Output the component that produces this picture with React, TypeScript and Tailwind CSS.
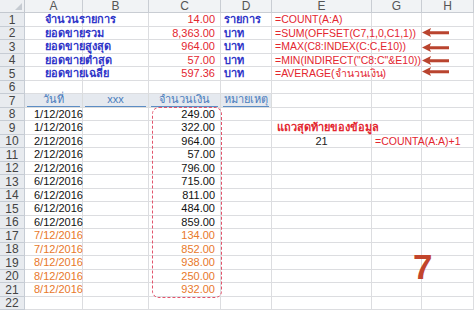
import React from "react";

type Cell = { t: string; c?: string };

const cols = ["A", "B", "C", "D", "E", "G", "H"];

const blue = "text-[#2f35c8] font-bold";
const red = "text-[#e3262f]";
const formula = "text-[#e3262f] text-[10.5px] pl-[3px]";
const head = "text-[#4a7dbd] justify-center";
const orange = "text-[#e8782a]";

const data: Record<number, Partial<Record<string, Cell>>> = {
  1: {
    A: { t: "จำนวนรายการ", c: `${blue} pl-[20px]` },
    C: { t: "14.00", c: `${red} justify-end pr-[5px]` },
    D: { t: "รายการ", c: `${blue} pl-[3px]` },
    E: { t: "=COUNT(A:A)", c: formula },
  },
  2: {
    A: { t: "ยอดขายรวม", c: `${blue} pl-[20px]` },
    C: { t: "8,363.00", c: `${red} justify-end pr-[5px]` },
    D: { t: "บาท", c: `${blue} pl-[3px]` },
    E: { t: "=SUM(OFFSET(C7,1,0,C1,1))", c: formula },
  },
  3: {
    A: { t: "ยอดขายสูงสุด", c: `${blue} pl-[20px]` },
    C: { t: "964.00", c: `${red} justify-end pr-[5px]` },
    D: { t: "บาท", c: `${blue} pl-[3px]` },
    E: { t: "=MAX(C8:INDEX(C:C,E10))", c: formula },
  },
  4: {
    A: { t: "ยอดขายต่ำสุด", c: `${blue} pl-[20px]` },
    C: { t: "57.00", c: `${red} justify-end pr-[5px]` },
    D: { t: "บาท", c: `${blue} pl-[3px]` },
    E: { t: '=MIN(INDIRECT("C8:C"&E10))', c: formula },
  },
  5: {
    A: { t: "ยอดขายเฉลี่ย", c: `${blue} pl-[20px]` },
    C: { t: "597.36", c: `${red} justify-end pr-[5px]` },
    D: { t: "บาท", c: `${blue} pl-[3px]` },
    E: { t: "=AVERAGE(จำนวนเงิน)", c: formula },
  },
  9: { E: { t: "แถวสุดท้ายของข้อมูล", c: `${red} font-bold pl-[5px]` } },
  10: {
    E: { t: "21", c: "text-[#222] justify-center" },
    G: { t: "=COUNTA(A:A)+1", c: formula },
  },
};

const sales: [string, string][] = [
  ["1/12/2016", "249.00"],
  ["1/12/2016", "322.00"],
  ["2/12/2016", "964.00"],
  ["2/12/2016", "57.00"],
  ["2/12/2016", "796.00"],
  ["6/12/2016", "715.00"],
  ["6/12/2016", "811.00"],
  ["6/12/2016", "484.00"],
  ["6/12/2016", "859.00"],
  ["7/12/2016", "134.00"],
  ["7/12/2016", "852.00"],
  ["8/12/2016", "938.00"],
  ["8/12/2016", "250.00"],
  ["8/12/2016", "932.00"],
];

sales.forEach(([d, v], i) => {
  const r = 8 + i;
  const col = r >= 17 ? orange : "text-[#111]";
  data[r] = {
    ...(data[r] || {}),
    A: { t: d, c: `${col} pl-[9px]` },
    C: { t: v, c: `${col} justify-end pr-[5px]` },
  };
});

const headers = ["วันที่", "xxx", "จำนวนเงิน", "หมายเหตุ"];

const Arrow = ({ top }: { top: number }) => (
  <svg
    className="absolute left-[421px]"
    style={{ top }}
    width="29"
    height="11"
    viewBox="0 0 29 11"
  >
    <path d="M1 5.5 L10 1 L8.8 4.2 L28 4.2 L28 7 L8.8 7 L10 10 Z" fill="#b9442f" />
    <path d="M8.8 7 L28 7 L28 8 L9.3 8 Z" fill="#e2a99c" opacity="0.6" />
  </svg>
);

export default function App() {
  return (
    <div className="relative w-[474px] h-[311px] overflow-hidden bg-white font-['Liberation_Sans','DejaVu_Sans',sans-serif] text-[11px]">
      <div className="grid grid-cols-[25px_58px_66px_72px_51px_100px_50px_52px] grid-rows-[13px_repeat(11,14px_13px)]">
        {/* column header row */}
        <div className="bg-[#eef0f3] border-r border-b border-[#c3c8cf] flex items-end justify-end p-[2px]">
          <svg width="7" height="7" viewBox="0 0 7 7">
            <path d="M7 0 L7 7 L0 7 Z" fill="#c6cbd2" />
          </svg>
        </div>
        {cols.map((c) => (
          <div
            key={c}
            className="bg-[#f1f3f5] border-r border-b border-[#c9cdd3] flex items-center justify-center text-[#555] text-[12px] leading-none"
          >
            {c}
          </div>
        ))}

        {Array.from({ length: 22 }, (_, i) => i + 1).map((r) => (
          <React.Fragment key={r}>
            <div className="bg-[#e8ebef] border-r border-b border-[#c6ccd4] flex items-center justify-center text-[#444] text-[12px] leading-none">
              {r}
            </div>
            {cols.map((c, ci) => {
              if (r === 7 && ci < 4) {
                return (
                  <div
                    key={c}
                    className="bg-[#e5e9ef] border-r border-b border-[#dadcdd] flex flex-col justify-end"
                  >
                    <div className={`flex ${head} leading-none text-[11px] pb-[1px]`}>
                      {headers[ci]}
                    </div>
                    <div className="h-[3px] mx-[2px] bg-[#5b8cc4]" />
                  </div>
                );
              }
              const cell = data[r]?.[c];
              return (
                <div
                  key={c}
                  className={`border-r border-b border-[#dcdde0] flex items-center whitespace-nowrap leading-none ${cell?.c ?? ""}`}
                >
                  {cell?.t}
                </div>
              );
            })}
          </React.Fragment>
        ))}
      </div>

      {/* dashed outline around the amounts */}
      <div className="absolute left-[152px] top-[107px] w-[70px] h-[191px] border-[1.5px] border-dashed border-[#e2536b] rounded-[7px]" />

      <Arrow top={27} />
      <Arrow top={42} />
      <Arrow top={55} />
      <Arrow top={66} />

      <div className="absolute left-[413px] top-[249px] text-[35px] font-bold leading-none text-[#c2452c]">
        7
      </div>
    </div>
  );
}
